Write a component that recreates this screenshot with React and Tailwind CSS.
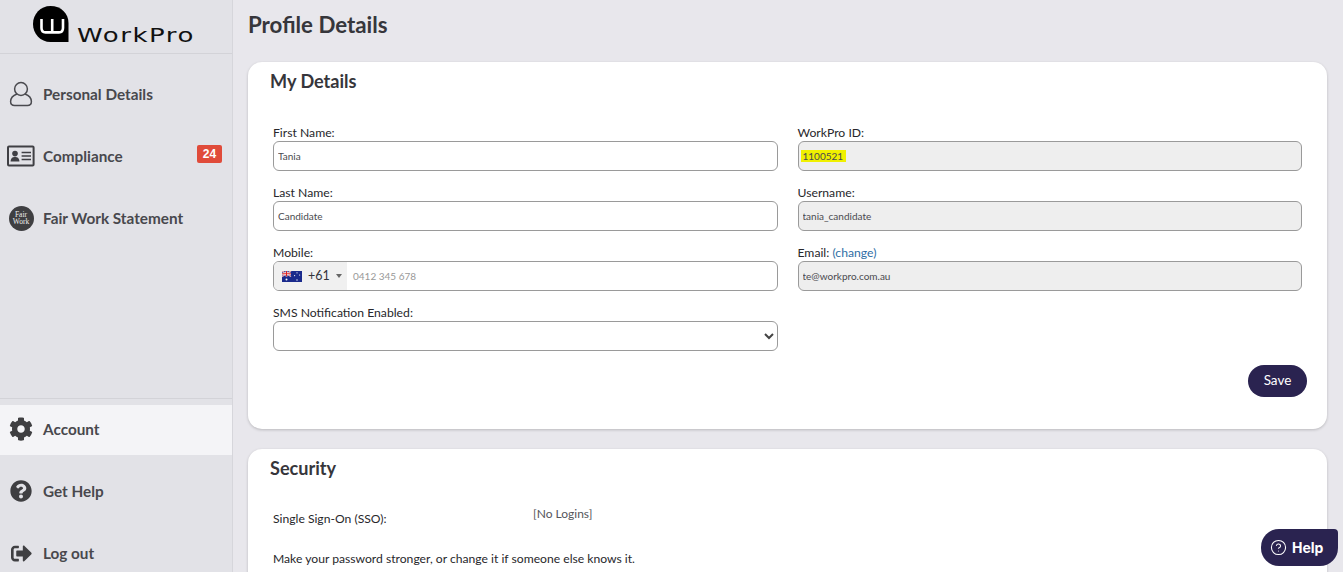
import React from 'react';
import { FaCog, FaQuestionCircle, FaSignOutAlt } from 'react-icons/fa';
import { CircleHelp } from 'lucide-react';

const PersonIcon = () => (
  <svg width="24" height="26" viewBox="0 0 24 26" fill="none" stroke="#4a4a4f" strokeWidth="1.5">
    <circle cx="12" cy="8" r="6.4" />
    <path d="M8 13C4 14.5 1.6 17 1.6 20.6 1.6 23.4 3 24.6 5.6 24.6H18.4C21 24.6 22.4 23.4 22.4 20.6 22.4 17 20 14.5 16 13" />
  </svg>
);

const IdIcon = () => (
  <svg width="28" height="22" viewBox="0 0 28 22" fill="none">
    <rect x="1" y="1.5" width="25.6" height="19" rx="1" stroke="#3f3f44" strokeWidth="2" />
    <circle cx="8" cy="8.6" r="2.8" fill="#3f3f44" />
    <path d="M3.6 16.6C3.6 13.2 5.4 12 8 12S12.4 13.2 12.4 16.6Z" fill="#3f3f44" />
    <path d="M14.6 7.6H24M14.6 11H24M14.6 14.4H24" stroke="#3f3f44" strokeWidth="1.5" />
  </svg>
);

const AuFlag = () => (
  <svg width="20" height="11" viewBox="0 0 20 11">
    <rect width="20" height="11" fill="#1a2a8c" />
    <path d="M0 0L9 5.5M9 0L0 5.5" stroke="#fff" strokeWidth="1.3" />
    <path d="M0 0L9 5.5M9 0L0 5.5" stroke="#d22" strokeWidth="0.5" />
    <path d="M4.5 0V5.5M0 2.75H9" stroke="#fff" strokeWidth="1.8" />
    <path d="M4.5 0V5.5M0 2.75H9" stroke="#d22" strokeWidth="1" />
    <circle cx="4.5" cy="8.4" r="1" fill="#fff" />
    <circle cx="15" cy="1.8" r="0.6" fill="#fff" />
    <circle cx="12.6" cy="4.6" r="0.6" fill="#fff" />
    <circle cx="17.6" cy="4" r="0.6" fill="#fff" />
    <circle cx="15" cy="9" r="0.7" fill="#fff" />
  </svg>
);

function NavItem({ icon, label, badge, active, bottom }) {
  return (
    <div className="h-[62px] py-1.5">
      <div className={`relative h-full flex items-center pl-[7px] ${active ? 'bg-[#f4f4f7]' : ''}`}>
        <div className={`w-[28px] flex justify-center shrink-0 ${bottom ? 'mb-[2px]' : ''}`}>{icon}</div>
        <span className={`ml-2 text-[15.3px] font-bold text-[#48484d] ${bottom ? 'mb-[2px]' : ''}`}>{label}</span>
        {badge && (
          <span className="absolute left-[197px] top-[14px] w-[25px] h-[18px] text-center rounded-[2px] bg-[#e04b3a] text-white text-[12px] font-bold leading-[18px] font-['Liberation_Sans',sans-serif]">
            {badge}
          </span>
        )}
      </div>
    </div>
  );
}

function Field({ label, children }) {
  return (
    <div className="h-[60px]">
      <div className="h-[18px] text-[12.2px] leading-[19px] text-[#27272b]">{label}</div>
      {children}
    </div>
  );
}

function TextInput({ value, disabled }) {
  return (
    <input
      readOnly
      value={value}
      className={`block w-full h-[30px] px-[4px] border border-[#9a9a9a] rounded-[6px] text-[10px] text-[#4a4a4f] outline-none ${disabled ? 'bg-[#eeeeee]' : 'bg-white'}`}
    />
  );
}

export default function App() {
  return (
    <div className="h-screen flex overflow-hidden bg-[#e8e7ec] font-['Lato',sans-serif]">
      <aside className="w-[233px] h-[585px] shrink-0 flex flex-col bg-[#e2e2e7] border-r border-[#d6d6db]">
        <div className="h-[54px] shrink-0 border-b border-[#d3d3d8] flex items-start pl-[33px] pt-[6px]">
          <svg width="36" height="36" viewBox="0 0 36 36" className="shrink-0">
            <path d="M17.5 0C28 0 35.5 7.5 35.5 17V36H17.5C7.5 36 0 28 0 18S7.5 0 17.5 0Z" fill="#000" />
            <path d="M8.5 13V22C8.5 25 10 26.4 12.5 26.4H26C28.5 26.4 30 25 30 22V13M19.2 13V25" fill="none" stroke="#fff" strokeWidth="2.6" />
          </svg>
          <span className="ml-[8px] mt-[19px] origin-left scale-x-[1.3] text-[20px] leading-[20px] tracking-[1.2px] text-[#111] font-['DejaVu_Sans',sans-serif]">WorkPro</span>
        </div>
        <div className="pt-[9px]">
          <NavItem icon={<PersonIcon />} label="Personal Details" />
          <NavItem icon={<IdIcon />} label="Compliance" badge="24" />
          <NavItem
            label="Fair Work Statement"
            icon={
              <div className="w-[25px] h-[25px] rounded-full bg-[#3f3f42] text-[#eee] text-[7.5px] leading-[7px] text-center flex items-center justify-center font-['Liberation_Serif',serif]">
                Fair<br />Work
              </div>
            }
          />
        </div>
        <div className="mt-auto border-t border-[#d3d3d8]">
          <NavItem bottom icon={<FaCog className="text-[24px] text-[#3f3f42]" />} label="Account" active />
          <NavItem bottom icon={<FaQuestionCircle className="text-[22px] text-[#3f3f42]" />} label="Get Help" />
          <NavItem bottom icon={<FaSignOutAlt className="text-[21px] text-[#3f3f42]" />} label="Log out" />
        </div>
      </aside>

      <main className="flex-1 min-w-0 pl-[15px] pr-4">
        <h1 className="h-[62px] pt-[9px] text-[22.3px] leading-[32px] font-bold text-[#36363b]">Profile Details</h1>

        <section className="h-[367px] bg-white rounded-[14px] shadow-[0_1px_3px_rgba(0,0,0,0.2)] px-[25px]">
          <h2 className="h-[61px] pt-[5px] -ml-[3px] text-[18.1px] leading-[28px] font-bold text-[#36363b]">My Details</h2>
          <div className="grid grid-cols-2 gap-x-5">
            <div>
              <Field label="First Name:"><TextInput value="Tania" /></Field>
              <Field label="Last Name:"><TextInput value="Candidate" /></Field>
              <Field label="Mobile:">
                <div className="h-[30px] flex items-center border border-[#9a9a9a] rounded-[6px] overflow-hidden">
                  <div className="h-full w-[73px] shrink-0 bg-[#f0f0f0] flex items-center pl-[8px]">
                    <AuFlag />
                    <span className="ml-[6px] text-[12.5px] text-[#33333a]">+61</span>
                    <span className="ml-[6px] border-x-[3px] border-x-transparent border-t-[4px] border-t-[#666]" />
                  </div>
                  <span className="pl-[6px] text-[10px] text-[#999]">0412 345 678</span>
                </div>
              </Field>
              <Field label="SMS Notification Enabled:">
                <select className="block w-full h-[30px] bg-white border border-[#9a9a9a] rounded-[6px] text-[10px] text-[#444]">
                  <option></option>
                </select>
              </Field>
            </div>
            <div>
              <Field label="WorkPro ID:">
                <div className="h-[30px] flex items-center pl-[2px] bg-[#eeeeee] border border-[#9a9a9a] rounded-[6px]">
                  <span className="h-[12px] pl-[2px] pr-[3px] bg-[#f0f000] text-[10px] leading-[12px] text-[#4a4a4f]">1100521</span>
                </div>
              </Field>
              <Field label="Username:"><TextInput value="tania_candidate" disabled /></Field>
              <Field label={<>Email: <span className="text-[#2f6ea5]">(change)</span></>}><TextInput value="te@workpro.com.au" disabled /></Field>
            </div>
          </div>
          <div className="flex justify-end -mr-[5px] mt-[2px]">
            <button className="w-[59px] h-[32px] pb-[2px] rounded-full bg-[#2a2350] text-white text-[13.5px]">Save</button>
          </div>
        </section>

        <section className="mt-5 h-[300px] bg-white rounded-[14px] shadow-[0_1px_3px_rgba(0,0,0,0.2)] px-[25px] text-[12.15px] text-[#27272b]">
          <h2 className="h-[50px] pt-[5px] -ml-[3px] text-[18.1px] leading-[28px] font-bold text-[#36363b]">Security</h2>
          <div className="flex h-[36px]">
            <span className="w-[260px] pt-[11px] leading-[18px]">Single Sign-On (SSO):</span>
            <span className="text-[12px] pt-[6px] leading-[18px] text-[#55555a]">[No Logins]</span>
          </div>
          <p className="mt-[15px] leading-[18px]">Make your password stronger, or change it if someone else knows it.</p>
        </section>
      </main>

      <button className="fixed left-[1261px] top-[529px] w-[77px] h-[37px] flex items-center pl-[9px] gap-[5px] bg-[#2a2350] text-white text-[14px] font-bold rounded-tl-[18px] rounded-tr-[4px] rounded-br-[18px] rounded-bl-[18px] font-['Inter',sans-serif]">
        <CircleHelp size={17} strokeWidth={1.5} />
        Help
      </button>
    </div>
  );
}
